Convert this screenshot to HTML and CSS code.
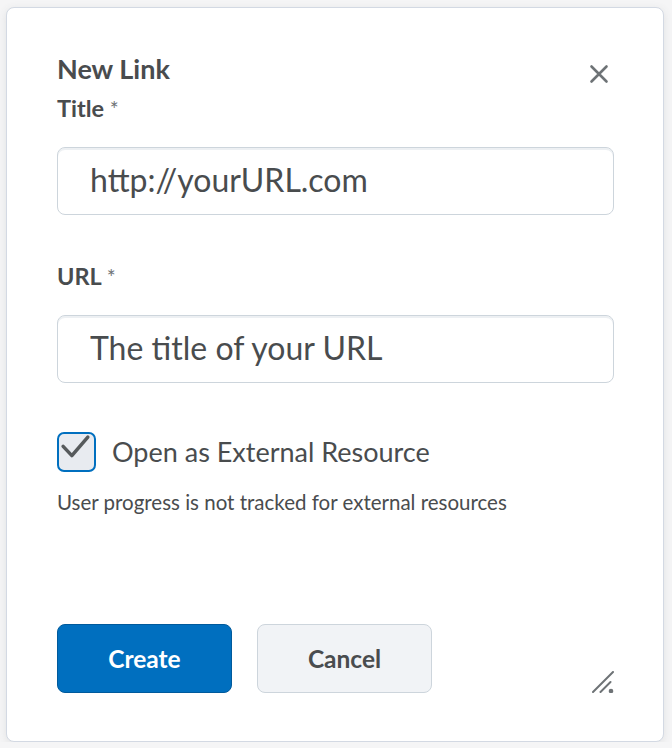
FILE: index.html
```html
<!DOCTYPE html>
<html lang="en">
<head>
      <meta charset="UTF-8">
      <meta name="viewport" content="width=device-width, initial-scale=1.0">
      <title>New Link</title>
      <link rel="stylesheet" href="styles.css">
</head>
<body>
      <section class="dialog">
            <header class="dialog-head">
                  <h2 class="dialog-title">New Link</h2>
                  <button class="close-btn" aria-label="Close">
                        <svg viewBox="0 0 20 20" width="20" height="20"><path d="M2.5 2.5 L17.5 17.5 M17.5 2.5 L2.5 17.5"/></svg>
                  </button>
            </header>
            <label class="field-label" for="title">Title <span class="req">*</span></label>
            <input class="field-input" id="title" type="text" value="http://yourURL.com">
            <label class="field-label url-label" for="url">URL <span class="req">*</span></label>
            <input class="field-input" id="url" type="text" value="The title of your URL">
            <label class="check-row">
                  <span class="check-box">
                        <svg viewBox="0 0 34 35"><path d="M4 12 L12.5 21 L28 3"/></svg>
                  </span>
                  Open as External Resource
            </label>
            <p class="help-text">User progress is not tracked for external resources</p>
            <footer class="dialog-foot">
                  <button class="btn btn-primary">Create</button>
                  <button class="btn">Cancel</button>
                  <svg class="resize-grip" viewBox="0 0 22 22"><path d="M1 21 L21 1 M8.5 21 L18.5 11"/><circle cx="19" cy="20" r="1.3"/></svg>
            </footer>
      </section>
</body>
</html>
```
FILE: styles.css
```css
html{
      box-sizing: border-box;
}
*, *:after, *:before{
      box-sizing: inherit;
}
body{
      margin: 0;
      background: #f5f5f6;
      font-family: Lato, "Open Sans", sans-serif;
      color: #494c4e;
}
.dialog{
      display: flex;
      flex-direction: column;
      margin: 7px 8px 0 6px;
      height: 735px;
      padding: 46px 49px 48px 50px;
      background: #fff;
      border: 1px solid #d3d9e3;
      border-radius: 8px;
      box-shadow: 0 2px 8px rgba(86, 90, 92, .12);
}
.dialog-head{
      display: flex;
      justify-content: space-between;
      align-items: flex-start;
}
.dialog-title{
      margin: 0;
      font-size: 27px;
      line-height: 30px;
      font-weight: 700;
}
.close-btn{
      margin: 10px 5px 0 0;
      padding: 0;
      width: 20px;
      height: 20px;
      border: none;
      background: none;
}
.close-btn svg{
      display: block;
      fill: none;
      stroke: #6e7376;
      stroke-width: 2.6;
      stroke-linecap: round;
}
.field-label{
      display: block;
      margin-top: 11px;
      font-size: 23.5px;
      line-height: 26px;
      font-weight: 700;
}
.url-label{
      margin-top: 48px;
}
.req{
      font-weight: 400;
      color: #6e7376;
      font-size: 21px;
}
.field-input{
      display: block;
      margin-top: 25px;
      width: 100%;
      height: 68px;
      padding: 0 20px 4px 32px;
      font-family: inherit;
      font-size: 32px;
      color: #494c4e;
      background: #fff;
      border: 1px solid #cdd5dc;
      border-radius: 8px;
      box-shadow: inset 0 2px 0 rgba(185, 194, 208, .25);
      outline: none;
}
.check-row{
      display: flex;
      align-items: center;
      gap: 16px;
      margin-top: 49px;
      font-size: 27px;
      line-height: 40px;
}
.check-box{
      display: block;
      width: 39px;
      height: 40px;
      border: 2.5px solid #006fbf;
      border-radius: 7px;
      background: #e8ebf0;
}
.check-box svg{
      display: block;
      width: 100%;
      height: 100%;
      fill: none;
      stroke: #565a5c;
      stroke-width: 3.4;
      stroke-linecap: round;
      stroke-linejoin: round;
}
.help-text{
      margin: 19px 0 0;
      font-size: 20.5px;
      line-height: 22px;
}
.dialog-foot{
      display: flex;
      align-items: flex-end;
      gap: 25px;
      margin-top: auto;
}
.btn{
      width: 175px;
      height: 69px;
      padding: 0;
      font-family: inherit;
      font-size: 24.5px;
      font-weight: 700;
      color: #494c4e;
      background: #f1f3f6;
      border: 1px solid #cdd5dc;
      border-radius: 8px;
}
.btn-primary{
      color: #fff;
      background: #006fbf;
      border-color: #005a9c;
}
.resize-grip{
      margin-left: auto;
      width: 22px;
      height: 22px;
      fill: #6e7376;
      stroke: #6e7376;
      stroke-width: 2;
      stroke-linecap: round;
}
```
